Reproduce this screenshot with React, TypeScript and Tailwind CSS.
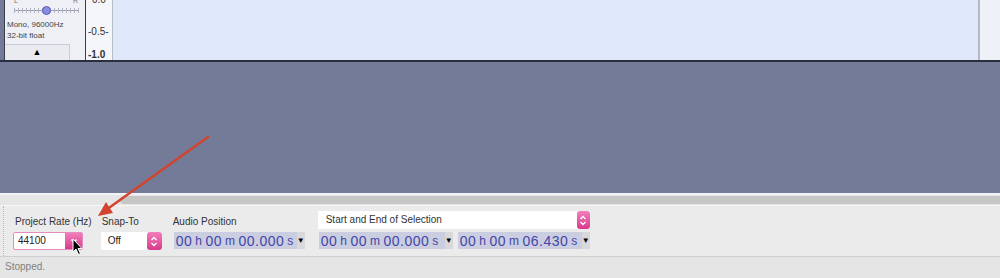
const pinkBtn =
  "flex items-center justify-center bg-gradient-to-b from-[#f27dbd] to-[#d8378b] text-white";

const UpDown = () => (
  <svg width="8" height="11" viewBox="0 0 8 11" fill="none" stroke="white" strokeWidth="1.4">
    <path d="M1.5 4 L4 1.5 L6.5 4" />
    <path d="M1.5 7 L4 9.5 L6.5 7" />
  </svg>
);

const TimeCtl = ({ value, w }: { value: string[]; w: string }) => (
  <div className={`flex h-[17px] items-stretch ${w}`}>
    <div className="flex flex-1 items-center bg-[#cacee0] pl-[2px] text-[14px] leading-none text-[#4545a8] tracking-[0.5px]">
      <span>{value[0]}</span>
      <span className="mx-[3px] text-[12px]">h</span>
      <span>{value[1]}</span>
      <span className="mx-[3px] text-[12px]">m</span>
      <span>{value[2]}</span>
      <span className="ml-[3px] text-[12px]">s</span>
    </div>
    <div className="flex w-[8px] items-center justify-center bg-[#d9d9dc] text-[8px] text-black">▼</div>
  </div>
);

export default function App() {
  return (
    <div className="relative h-[278px] w-[1000px] overflow-hidden bg-[#737b98] font-['Liberation_Sans',sans-serif]">
      {/* track */}
      <div className="flex h-[62px] border-b-2 border-[#2a2f3e]">
        <div className="w-[4px]" />
        <div className="flex w-[82px] flex-col border-l border-r border-[#3a3e4a] bg-[#eef0f6]">
          <div className="relative h-[18px]">
            <div className="absolute left-[9px] top-[-4px] text-[7px] text-[#777]">L</div>
            <div className="absolute left-[68px] top-[-4px] text-[7px] text-[#777]">R</div>
            <div className="absolute left-[9px] right-[6px] top-[10px] h-px bg-[#9aa0b0]" />
            <div className="absolute left-[9px] right-[6px] top-[8px] h-[5px] bg-[repeating-linear-gradient(90deg,#b0b4c0_0_1px,transparent_1px_4px)]" />
            <div className="absolute left-[37px] top-[6px] h-[9px] w-[9px] rounded-full border border-[#5a5cc0] bg-[#8a8ce0]" />
          </div>
          <div className="pl-[2px] pt-[1px] text-[8px] leading-[11px] text-[#444]">
            <div>Mono, 96000Hz</div>
            <div>32-bit float</div>
          </div>
          <div className="mt-auto flex h-[16px] w-[65px] items-center justify-center border-t border-r border-[#c9ccd4] bg-[#e9ebf0] text-[9px] text-black">
            ▲
          </div>
        </div>
        <div className="relative w-[27px] border-r border-[#b9bdc9] bg-[#f5f6fa] text-[10px] text-[#333]">
          <div className="absolute left-[6px] top-[-8px]">0.0</div>
          <div className="absolute left-[2px] top-[24px]">-0.5-</div>
          <div className="absolute left-[2px] top-[47px] font-bold">-1.0</div>
        </div>
        <div className="flex-1 bg-[#dfe7fb]" />
        <div className="w-[2px] bg-[#b4b9c6]" />
        <div className="w-[20px] bg-[#eef1f8]" />
      </div>

      <div className="h-[131px]" />
      <div className="h-[2px] bg-[#f3f3f7]" />

      {/* scrollbar */}
      <div className="flex h-[10px] bg-[#e6e6e6]">
        <div className="w-[120px]" />
        <div className="my-[1px] flex-1 rounded-l-[5px] bg-[#c6c7c4]" />
      </div>

      {/* toolbar */}
      <div className="flex h-[51px] border-t border-[#f7f7f7] bg-[#ebebeb] text-[10px] text-[#333]">
        <div className="ml-[3px] w-px border-l border-dotted border-[#bbb]" />
        <div className="ml-[9px] flex flex-col pt-[10px]">
          <div className="ml-[2px] h-[12px] leading-[12px]">Project Rate (Hz)</div>
          <div className="relative mt-[4px] flex h-[18px] w-[70px] rounded-[2px] border border-[#e38cbf] bg-white">
            <div className="flex-1 pl-[4px] leading-[16px] text-[#222]">44100</div>
            <div className={`${pinkBtn} w-[17px]`}>
              <svg width="8" height="6" viewBox="0 0 8 6" fill="none" stroke="white" strokeWidth="1.4">
                <path d="M1.5 1.5 L4 4.5 L6.5 1.5" />
              </svg>
            </div>
            <svg className="absolute left-[58px] top-[5px]" width="12" height="18" viewBox="0 0 12 18">
              <path d="M1 1 L1 14 L4 11 L6.5 16.5 L8.5 15.5 L6 10.5 L10 10.5 Z" fill="black" stroke="white" strokeWidth="1" />
            </svg>
          </div>
        </div>
        <div className="ml-[9px] flex flex-col pt-[10px]">
          <div className="ml-px h-[12px] leading-[12px]">Snap-To</div>
          <div className="mt-[4px] flex h-[18px] w-[61px] rounded-[2px] bg-white">
            <div className="flex-1 pl-[7px] leading-[18px] text-[#222]">Off</div>
            <div className={`${pinkBtn} w-[15px] rounded-[3px]`}>
              <UpDown />
            </div>
          </div>
        </div>
        <div className="ml-[11px] flex flex-col pt-[10px]">
          <div className="h-[12px] leading-[12px]">Audio Position</div>
          <div className="mt-[4px] ml-px">
            <TimeCtl value={["00", "00", "00.000"]} w="w-[131px]" />
          </div>
        </div>
        <div className="ml-[13px] flex flex-col pt-[5px]">
          <div className="flex h-[18px] w-[272px] bg-white">
            <div className="flex-1 pl-[8px] leading-[18px] text-[#333]">Start and End of Selection</div>
            <div className={`${pinkBtn} w-[13px] rounded-[3px]`}>
              <UpDown />
            </div>
          </div>
          <div className="mt-[3px] flex gap-[5px] pl-px">
            <TimeCtl value={["00", "00", "00.000"]} w="w-[134px]" />
            <TimeCtl value={["00", "00", "06.430"]} w="w-[132px]" />
          </div>
        </div>
      </div>

      {/* status */}
      <div className="h-[22px] border-t border-[#cfcfcf] bg-[#e5e5e5] pl-[5px] text-[10px] leading-[20px] text-[#808080]">
        Stopped.
      </div>

      {/* annotation arrow */}
      <svg className="pointer-events-none absolute left-0 top-0" width="1000" height="278">
        <line x1="208" y1="137" x2="106" y2="210" stroke="#d2442e" strokeWidth="2.5" strokeLinecap="round" />
        <polygon points="98,216 113,213 106,202" fill="#d2442e" />
      </svg>
    </div>
  );
}
